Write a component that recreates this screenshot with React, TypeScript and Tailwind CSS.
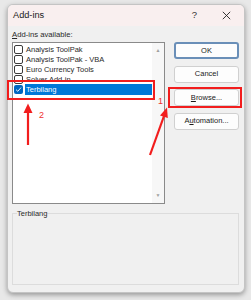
import React from 'react';

const items = ['Analysis ToolPak', 'Analysis ToolPak - VBA', 'Euro Currency Tools', 'Solver Add-in', 'Terbilang'];

function Box({ checked }: { checked?: boolean }) {
  if (checked) {
    return (
      <span className="w-[9px] h-[9px] rounded-[2px] bg-[#0067c0] flex items-center justify-center shrink-0">
        <svg width="7" height="7" viewBox="0 0 7 7">
          <path d="M1 3.6 L2.8 5.3 L6 1.6" fill="none" stroke="#fff" strokeWidth="0.9" />
        </svg>
      </span>
    );
  }
  return <span className="w-[9px] h-[9px] rounded-[2px] border border-[#3a3a3a] bg-white shrink-0" />;
}

function Btn({ children, primary }: { children: React.ReactNode; primary?: boolean }) {
  return (
    <div
      className={`h-[17px] w-[65px] rounded-[3px] bg-[#fdfdfd] flex items-center justify-center text-[7.5px] text-[#1b1b1b] ${
        primary ? 'border-2 border-[#6a8fb8]' : 'border border-[#d0d0d0]'
      }`}
    >
      {children}
    </div>
  );
}

export default function App() {
  return (
    <div className="relative w-[251px] h-[300px] overflow-hidden bg-[#e8e8e8] pt-[4px] pl-[7px] font-['Liberation_Sans',Arial,sans-serif]">
      <div className="w-[238px] h-[289px] bg-[#f0f0f0] rounded-[6px] border border-[#c4c4c4] shadow-[0_2px_5px_rgba(0,0,0,0.35)] overflow-hidden flex flex-col">
        <div className="h-[21px] bg-[#f9efef] flex items-center pl-[5px] shrink-0">
          <span className="text-[9.2px] text-[#1a1a1a]">Add-ins</span>
          <span className="ml-auto mr-[25px] text-[9.5px] text-[#333]">?</span>
          <svg width="9" height="9" viewBox="0 0 9 9" className="mr-[13px]">
            <path d="M0.8 0.8 L8.2 8.2 M8.2 0.8 L0.8 8.2" stroke="#222" strokeWidth="0.9" />
          </svg>
        </div>

        <div className="px-[4px] pt-[4px] flex flex-col">
          <div className="text-[7.7px] leading-[10px] text-[#2a2a2a]">
            <span className="underline">A</span>dd-ins available:
          </div>

          <div className="flex mt-[2px]">
            <div className="w-[153px] h-[162px] border border-[#8a8a8a] bg-white flex">
              <div className="flex-1 pt-[2px] pl-[1px]">
                {items.map((t, i) => {
                  const sel = i === items.length - 1;
                  return (
                    <div key={t} className="h-[9.8px] flex items-center gap-[2px]">
                      <Box checked={sel} />
                      <span
                        className={`text-[7.5px] leading-[11px] pl-[1px] ${
                          sel ? 'bg-[#0078d7] text-white flex-1 h-[11px]' : 'text-[#2a2a2a]'
                        }`}
                      >
                        {t}
                      </span>
                    </div>
                  );
                })}
              </div>
              <div className="w-[12px] bg-[#f7f7f7] flex flex-col items-center justify-between py-[4px] text-[5px] text-[#a0a0a0]">
                <span>▲</span>
                <span>▼</span>
              </div>
            </div>

            <div className="ml-[9px] flex flex-col gap-[6.5px]">
              <Btn primary>OK</Btn>
              <Btn>Cancel</Btn>
              <Btn>
                <span className="underline">B</span>rowse...
              </Btn>
              <Btn>
                A<span className="underline">u</span>tomation...
              </Btn>
            </div>
          </div>

          <fieldset className="mt-[5px] w-[227px] h-[76px] border border-[#dcdcdc] px-[4px]">
            <legend className="text-[7.5px] leading-[9px] text-[#2a2a2a] px-0">Terbilang</legend>
          </fieldset>
        </div>
      </div>

      {/* annotations */}
      <div className="absolute left-[7px] top-[80px] w-[148px] h-[20px] border-[2.3px] border-[#f21d1d]" />
      <div className="absolute left-[168px] top-[87px] w-[74px] h-[21px] border-[2.3px] border-[#f21d1d]" />
      <span className="absolute left-[158px] top-[95px] text-[9px] text-[#f03030]">1</span>
      <span className="absolute left-[39px] top-[109px] text-[9px] text-[#f03030]">2</span>
      <svg className="absolute left-0 top-0" width="251" height="300" viewBox="0 0 251 300">
        <path d="M28 145 L28 110" stroke="#f21d1d" strokeWidth="2.2" />
        <path d="M23.5 113 L28 103.5 L32.5 113 Z" fill="#f21d1d" />
        <path d="M150 155 L164 116" stroke="#f21d1d" strokeWidth="2.2" />
        <path d="M160 115.5 L167 107.5 L167.8 118 Z" fill="#f21d1d" />
      </svg>
    </div>
  );
}
